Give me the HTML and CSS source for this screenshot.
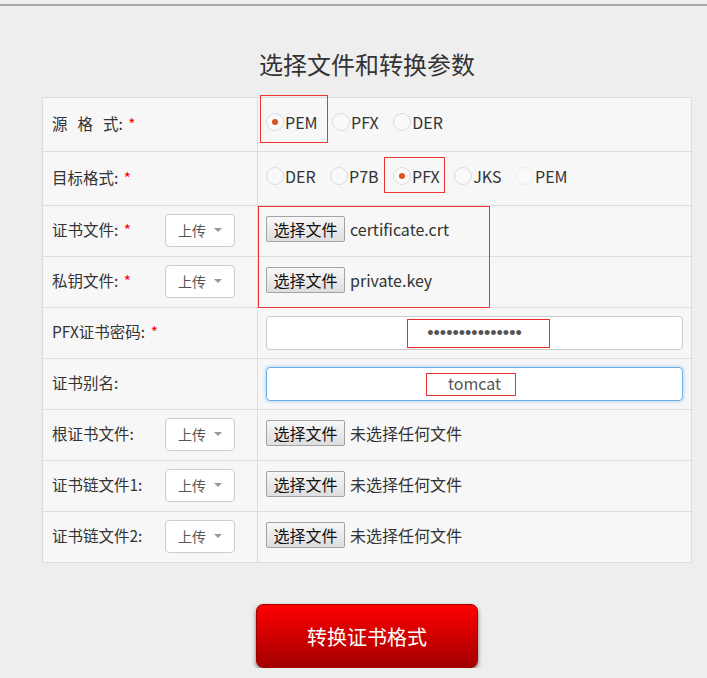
FILE: index.html
```
<!DOCTYPE html>
<html lang="zh-CN">
  <head>
    <meta charset="UTF-8" />
    <title>证书格式转换</title>
    <link rel="stylesheet" href="styles.css">
  </head>
  <body>
    <div class="topline"></div>
    <div class="page">
      <h1 class="title">选择文件和转换参数</h1>

      <div class="sheet">
        <table class="form-table">
          <tr class="tall">
            <td class="label-cell"><span class="spread">源格</span>式: <em>*</em></td>
            <td class="value-cell">
              <span class="radio checked"><i></i>PEM</span>
              <span class="radio"><i></i>PFX</span>
              <span class="radio"><i></i>DER</span>
            </td>
          </tr>
          <tr class="tall">
            <td class="label-cell">目标格式: <em>*</em></td>
            <td class="value-cell">
              <span class="radio"><i></i>DER</span>
              <span class="radio"><i></i>P7B</span>
              <span class="radio checked"><i></i>PFX</span>
              <span class="radio"><i></i>JKS</span>
              <span class="radio disabled"><i></i>PEM</span>
            </td>
          </tr>
          <tr>
            <td class="label-cell">
              <div class="label-row"><span>证书文件: <em>*</em></span><span class="pick">上传<b></b></span></div>
            </td>
            <td class="value-cell"><button class="file-btn">选择文件</button><span class="file-name">certificate.crt</span></td>
          </tr>
          <tr>
            <td class="label-cell">
              <div class="label-row"><span>私钥文件: <em>*</em></span><span class="pick">上传<b></b></span></div>
            </td>
            <td class="value-cell"><button class="file-btn">选择文件</button><span class="file-name">private.key</span></td>
          </tr>
          <tr>
            <td class="label-cell">PFX证书密码: <em>*</em></td>
            <td class="value-cell">
              <div class="field dots"><span class="mark mark-pwd"></span>•••••••••••••••</div>
            </td>
          </tr>
          <tr>
            <td class="label-cell">证书别名:</td>
            <td class="value-cell"><div class="field focus">tomcat</div></td>
          </tr>
          <tr>
            <td class="label-cell">
              <div class="label-row"><span>根证书文件:</span><span class="pick">上传<b></b></span></div>
            </td>
            <td class="value-cell"><button class="file-btn">选择文件</button><span class="file-name">未选择任何文件</span></td>
          </tr>
          <tr>
            <td class="label-cell">
              <div class="label-row"><span>证书链文件1:</span><span class="pick">上传<b></b></span></div>
            </td>
            <td class="value-cell"><button class="file-btn">选择文件</button><span class="file-name">未选择任何文件</span></td>
          </tr>
          <tr>
            <td class="label-cell">
              <div class="label-row"><span>证书链文件2:</span><span class="pick">上传<b></b></span></div>
            </td>
            <td class="value-cell"><button class="file-btn">选择文件</button><span class="file-name">未选择任何文件</span></td>
          </tr>
        </table>

        <!-- 标注框 -->
        <div class="mark mark-src"></div>
        <div class="mark mark-dst"></div>
        <div class="mark mark-files"></div>
        <div class="mark mark-alias"></div>
      </div>

      <button class="convert-btn">转换证书格式</button>
    </div>
  </body>
</html>
```

FILE: styles.css
```
body {
  margin: 0;
  background-color: #eeeeee;
  font-family: "Noto Sans CJK SC", "Noto Sans", sans-serif;
  color: #333;
}

.topline {
  margin-top: 4px;
  height: 2px;
  background-color: #a9a9a9;
}

.page {
  width: 650px;
  margin-left: 42px;
}

.title {
  margin: 0;
  padding-top: 41px;
  margin-bottom: 16px;
  font-size: 24px;
  line-height: 34px;
  font-weight: normal;
  text-align: center;
  color: #333;
}

.sheet {
  position: relative;
}

.form-table {
  width: 650px;
  border-collapse: collapse;
  background-color: #f7f7f7;
  table-layout: fixed;
}

.form-table tr {
  height: 51px;
}

.form-table tr.tall {
  height: 54px;
}

.form-table td {
  border: 1px solid #dddddd;
  padding: 0 0 4px;
  font-size: 15.5px;
  color: #333;
}

.label-cell {
  width: 205px;
  padding-left: 9px !important;
}

.label-cell em {
  font-style: normal;
  color: #f00;
  margin-left: 2px;
}

.spread {
  letter-spacing: 10px;
}

.label-row {
  display: flex;
  align-items: center;
}

.label-row > span:first-child {
  width: 113px;
}

.pick {
  display: flex;
  align-items: center;
  box-sizing: border-box;
  width: 70px;
  height: 33px;
  margin-top: 2px;
  padding-left: 12px;
  border: 1px solid #cccccc;
  border-radius: 4px;
  background-color: #fff;
  font-size: 14px;
  color: #555;
}

.pick b {
  margin-left: 8px;
  border-top: 4px solid #999;
  border-left: 4px solid transparent;
  border-right: 4px solid transparent;
}

.value-cell {
  padding-left: 8px !important;
}

.radio {
  display: inline-flex;
  align-items: center;
  margin-right: 11px;
  font-size: 16px;
  color: #333;
}

.radio i {
  position: relative;
  width: 16px;
  height: 16px;
  margin-right: 1px;
  border: 1px solid #dcdcdc;
  border-radius: 50%;
  background-color: #f9f9f9;
}

.radio.checked i::after {
  content: "";
  position: absolute;
  left: 5px;
  top: 5px;
  width: 6px;
  height: 6px;
  border-radius: 50%;
  background-color: #d9541e;
}

.radio.disabled i {
  border-color: #ececec;
}

.file-btn {
  box-sizing: border-box;
  width: 79px;
  height: 26px;
  padding: 0;
  border: 1px solid #a3a3a3;
  border-radius: 2px;
  background: linear-gradient(#f7f7f7, #dedede);
  font-family: inherit;
  font-size: 16px;
  line-height: 24px;
  color: #111;
  vertical-align: middle;
}

.file-name {
  margin-left: 5px;
  font-size: 16px;
  color: #333;
  vertical-align: middle;
}

.field {
  position: relative;
  box-sizing: border-box;
  width: 417px;
  height: 34px;
  margin-top: 3px;
  border: 1px solid #cccccc;
  border-radius: 4px;
  background-color: #fff;
  text-align: center;
  font-size: 16px;
  line-height: 30px;
  color: #555;
}

.field.dots {
  font-family: "Liberation Sans", sans-serif;
  font-size: 18px;
  line-height: 32px;
}

.field.focus {
  border-color: #66afe9;
  box-shadow: 0 0 4px rgba(102, 175, 233, 0.6);
}

.mark {
  position: absolute;
  z-index: 1;
  border: 1px solid #ee3333;
}

.mark-src {
  left: 218px;
  top: -2px;
  width: 66px;
  height: 46px;
}

.mark-dst {
  left: 342px;
  top: 60px;
  width: 59px;
  height: 34px;
}

.mark-files {
  left: 216px;
  top: 109px;
  width: 230px;
  height: 100px;
}

/* 相对于密码输入框 */
.mark-pwd {
  left: 140px;
  top: 2px;
  width: 141px;
  height: 27px;
  border-color: #f02c2c;
}

.mark-alias {
  left: 384px;
  top: 276px;
  width: 88px;
  height: 21px;
}

.convert-btn {
  display: block;
  width: 222px;
  height: 64px;
  margin: 41px auto 0;
  border: 1px solid #a00000;
  border-radius: 7px;
  background: linear-gradient(#ff0000, #a30000);
  box-shadow: 0 2px 4px rgba(0, 0, 0, 0.5);
  font-family: inherit;
  font-size: 20px;
  color: #fff;
}
```
